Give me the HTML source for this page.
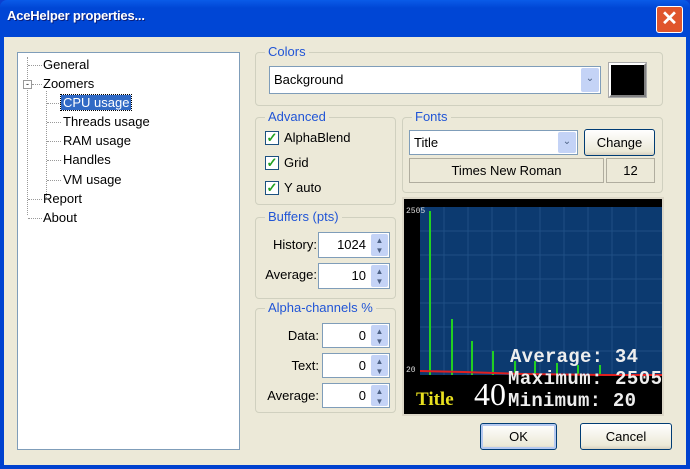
<!DOCTYPE html><html><head><style>
*{box-sizing:border-box}
body{margin:0;width:690px;height:469px;overflow:hidden;font-family:Tahoma,"Liberation Sans",sans-serif;font-size:13px;background:#0a3fd0}
.win{position:absolute;left:0;top:0;width:690px;height:469px;background:linear-gradient(#0a5be8,#0046d5 8px,#0041cf);border-radius:7px 7px 0 0}
.title{position:absolute;left:7px;top:8px;color:#fff;font-weight:bold;font-size:13px;text-shadow:1px 1px #0a1e7a;letter-spacing:-0.2px}
.x{position:absolute;left:656px;top:6px;width:27px;height:27px;background:#e0552c;border:1px solid #fff;border-radius:3px;color:#fff;font-weight:bold;font-size:20px;text-align:center;line-height:24px}
.body{position:absolute;left:4px;top:37px;width:682px;height:428px;background:#ece9d8}
.a{position:absolute}
.tree{left:13px;top:15px;width:223px;height:398px;background:#fff;border:1px solid #7f9db9}
.ti{position:absolute;font-size:13px;color:#000}
.grp{border:1px solid #d0d0bf;border-radius:4px}
.gl{position:absolute;top:-9px;left:9px;background:#ece9d8;color:#2155d6;padding:0 3px;font-size:13px}
.field{background:#fff;border:1px solid #7f9db9}
.btn{background:linear-gradient(#fff,#ece9d8 85%,#d6d0c0);border:1px solid #003c74;border-radius:3px;text-align:center;font-size:13px}
.spin{position:absolute;right:1px;top:1px;bottom:1px;width:17px;background:#c4d3f6;border-radius:2px;color:#4d6185;font-size:8px;text-align:center;line-height:10px;padding-top:2px}
.cb{position:absolute;width:14px;height:14px;border:1px solid #1c5180;background:#fff;color:#21a121;font-size:13px;line-height:12px;text-align:center;font-weight:bold}
.lbl{position:absolute;font-size:13px;text-align:right}
.h{position:absolute;height:1px;border-top:1px dotted #999}
</style></head><body>
<div class="win">
<div class="title">AceHelper properties...</div>
<div class="x">✕</div>
<div class="body">
<div class="a tree">
<div class="a" style="left:9px;top:4px;width:1px;height:158px;border-left:1px dotted #999"></div>
<div class="h" style="left:10px;top:12px;width:14px"></div>
<div class="h" style="left:14px;top:31px;width:10px"></div>
<div class="h" style="left:10px;top:146px;width:14px"></div>
<div class="h" style="left:10px;top:165px;width:14px"></div>
<div class="a" style="left:28px;top:38px;width:1px;height:107px;border-left:1px dotted #999"></div>
<div class="h" style="left:29px;top:50px;width:14px"></div>
<div class="h" style="left:29px;top:69px;width:14px"></div>
<div class="h" style="left:29px;top:88px;width:14px"></div>
<div class="h" style="left:29px;top:107px;width:14px"></div>
<div class="h" style="left:29px;top:127px;width:14px"></div>
<div class="a" style="left:5px;top:27px;width:9px;height:9px;border:1px solid #999;background:#fff;font-size:9px;line-height:6px;text-align:center">-</div>
<div class="ti" style="left:25px;top:4px">General</div>
<div class="ti" style="left:25px;top:23px">Zoomers</div>
<div class="ti" style="left:43px;top:42px;background:#316ac5;color:#fff;padding:0 2px;outline:1px dotted #000">CPU usage</div>
<div class="ti" style="left:45px;top:61px">Threads usage</div>
<div class="ti" style="left:45px;top:80px">RAM usage</div>
<div class="ti" style="left:45px;top:99px">Handles</div>
<div class="ti" style="left:45px;top:119px">VM usage</div>
<div class="ti" style="left:25px;top:138px">Report</div>
<div class="ti" style="left:25px;top:157px">About</div>
</div>

<div class="a grp" style="left:251px;top:15px;width:408px;height:54px"><div class="gl">Colors</div></div>
<div class="a field" style="left:265px;top:29px;width:332px;height:28px;padding:5px 4px">Background
<div class="spin" style="width:18px;line-height:22px;padding:0;font-size:10px">⌄</div></div>
<div class="a" style="left:605px;top:26px;width:37px;height:34px;border:2px solid #fff;border-right-color:#808080;border-bottom-color:#808080;background:#000;outline:1px solid #aaa"></div>

<div class="a grp" style="left:251px;top:80px;width:141px;height:88px"><div class="gl">Advanced</div></div>
<div class="cb" style="left:261px;top:94px">✓</div><div class="ti" style="left:280px;top:93px">AlphaBlend</div>
<div class="cb" style="left:261px;top:119px">✓</div><div class="ti" style="left:280px;top:118px">Grid</div>
<div class="cb" style="left:261px;top:144px">✓</div><div class="ti" style="left:280px;top:143px">Y auto</div>

<div class="a grp" style="left:398px;top:80px;width:261px;height:76px"><div class="gl">Fonts</div></div>
<div class="a field" style="left:405px;top:93px;width:169px;height:25px;padding:4px 4px">Title<div class="spin" style="width:18px;line-height:20px;padding:0;font-size:10px">⌄</div></div>
<div class="a btn" style="left:580px;top:92px;width:71px;height:27px;line-height:25px">Change</div>
<div class="a" style="left:405px;top:121px;width:195px;height:25px;border:1px solid #b0ad9f;text-align:center;line-height:23px">Times New Roman</div>
<div class="a" style="left:602px;top:121px;width:49px;height:25px;border:1px solid #b0ad9f;text-align:center;line-height:23px">12</div>

<div class="a grp" style="left:251px;top:180px;width:141px;height:82px"><div class="gl">Buffers (pts)</div></div>
<div class="lbl" style="left:255px;top:200px;width:58px">History:</div>
<div class="a field" style="left:314px;top:195px;width:72px;height:26px"><span class="a" style="right:23px;top:4px">1024</span><div class="spin">▲<br>▼</div></div>
<div class="lbl" style="left:255px;top:230px;width:58px">Average:</div>
<div class="a field" style="left:314px;top:226px;width:72px;height:26px"><span class="a" style="right:23px;top:4px">10</span><div class="spin">▲<br>▼</div></div>

<div class="a grp" style="left:251px;top:271px;width:141px;height:105px"><div class="gl">Alpha-channels %</div></div>
<div class="lbl" style="left:255px;top:291px;width:60px">Data:</div>
<div class="a field" style="left:318px;top:286px;width:68px;height:25px"><span class="a" style="right:23px;top:4px">0</span><div class="spin">▲<br>▼</div></div>
<div class="lbl" style="left:255px;top:321px;width:60px">Text:</div>
<div class="a field" style="left:318px;top:316px;width:68px;height:25px"><span class="a" style="right:23px;top:4px">0</span><div class="spin">▲<br>▼</div></div>
<div class="lbl" style="left:255px;top:351px;width:60px">Average:</div>
<div class="a field" style="left:318px;top:346px;width:68px;height:25px"><span class="a" style="right:23px;top:4px">0</span><div class="spin">▲<br>▼</div></div>

<div class="a" style="left:398px;top:160px;width:262px;height:219px;background:#000;border:2px solid #ddd8c8">
<svg width="258" height="215" style="position:absolute;left:0;top:0">
<rect x="16" y="8" width="242" height="168" fill="#0c3a70"/>
<g stroke="#1f4f85" stroke-width="1">
<line x1="40" y1="8" x2="40" y2="176"/><line x1="64" y1="8" x2="64" y2="176"/><line x1="88" y1="8" x2="88" y2="176"/><line x1="112" y1="8" x2="112" y2="176"/><line x1="136" y1="8" x2="136" y2="176"/><line x1="160" y1="8" x2="160" y2="176"/><line x1="184" y1="8" x2="184" y2="176"/><line x1="208" y1="8" x2="208" y2="176"/><line x1="232" y1="8" x2="232" y2="176"/>
<line x1="16" y1="32" x2="258" y2="32"/><line x1="16" y1="56" x2="258" y2="56"/><line x1="16" y1="80" x2="258" y2="80"/><line x1="16" y1="104" x2="258" y2="104"/><line x1="16" y1="128" x2="258" y2="128"/><line x1="16" y1="152" x2="258" y2="152"/>
</g>
<g stroke="#22d022" stroke-width="2">
<line x1="26" y1="176" x2="26" y2="12"/><line x1="48" y1="176" x2="48" y2="120"/><line x1="68" y1="176" x2="68" y2="142"/><line x1="89" y1="176" x2="89" y2="152"/><line x1="111" y1="176" x2="111" y2="162"/><line x1="131" y1="176" x2="131" y2="162"/><line x1="153" y1="176" x2="153" y2="164"/><line x1="174" y1="176" x2="174" y2="166"/><line x1="196" y1="176" x2="196" y2="166"/>
</g>
<polyline points="16,172 60,173 120,175 200,176 258,176" stroke="#e02020" stroke-width="2" fill="none"/>
<text x="2" y="14" fill="#ddd" font-family="Liberation Mono" font-size="8">2505</text>
<text x="2" y="173" fill="#ddd" font-family="Liberation Mono" font-size="8">20</text>
<text x="106" y="163" fill="#eee" font-family="Liberation Mono" font-weight="bold" font-size="19" textLength="128">Average: 34</text>
<text x="104" y="185" fill="#eee" font-family="Liberation Mono" font-weight="bold" font-size="19" textLength="154">Maximum: 2505</text>
<text x="104" y="207" fill="#eee" font-family="Liberation Mono" font-weight="bold" font-size="19" textLength="128">Minimum: 20</text>
<text x="12" y="206" fill="#e8e020" font-family="Liberation Serif" font-weight="bold" font-size="19">Title</text>
<text x="70" y="206" fill="#fff" font-family="Liberation Serif" font-size="32">40</text>
</svg></div>

<div class="a btn" style="left:476px;top:386px;width:77px;height:27px;line-height:25px;border-color:#003c74;box-shadow:inset 0 0 0 2px #b4c8f0">OK</div>
<div class="a btn" style="left:576px;top:386px;width:92px;height:27px;line-height:25px">Cancel</div>
</div></div>
</body></html>
